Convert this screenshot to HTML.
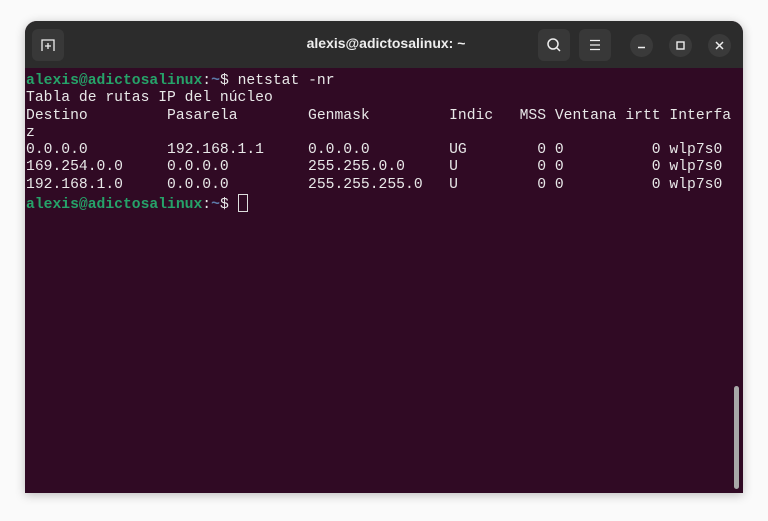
<!DOCTYPE html>
<html><head><style>
body{margin:0;width:768px;height:521px;background:#fafafa;position:relative;overflow:hidden}
.win{position:absolute;left:25px;top:21px;width:718px;height:472px;border-radius:12px 12px 0 0;overflow:hidden;box-shadow:0 2px 10px rgba(0,0,0,.25);background:#300a24}
.hdr{position:absolute;left:0;top:0;width:718px;height:47px;background:#2c2c2c}
.btn{position:absolute;top:8px;width:32px;height:32px;border-radius:6px;background:#383838}
.cb{position:absolute;top:13px;width:23px;height:23px;border-radius:50%;background:#3a3a3a}
.title{position:absolute;left:0;width:718px;top:14px;text-align:center;color:#eee;font:bold 14px "Liberation Sans",sans-serif;padding-left:4px;box-sizing:border-box}
pre{position:absolute;left:1px;top:52px;margin:0;font:14.7px/17.3px "Liberation Mono",monospace;color:#e8e8e8}
.g{color:#26a269;font-weight:bold}.b{color:#5d7aa8;font-weight:bold}
.cur{display:inline-block;width:8px;height:16px;border:1px solid #ddd;vertical-align:-4px}
.sb{position:absolute;left:709px;top:365px;width:5px;height:103px;border-radius:3px;background:#a8a8a8}
</style></head><body>
<div class="win">
<div class="hdr">
<div class="btn" style="left:7px"><svg width="32" height="32"><path d="M10 22V11h12v11M16 14v6M13 17h6" stroke="#eee" stroke-width="1.3" fill="none"/></svg></div>
<div class="title">alexis@adictosalinux: ~</div>
<div class="btn" style="left:513px"><svg width="32" height="32"><circle cx="15" cy="15" r="5" stroke="#eee" stroke-width="1.5" fill="none"/><path d="M19 19l3 3" stroke="#eee" stroke-width="1.5"/></svg></div>
<div class="btn" style="left:554px"><svg width="32" height="32"><path d="M11 11.5h10M11 16h10M11 20.5h10" stroke="#eee" stroke-width="1.3"/></svg></div>
<div class="cb" style="left:605px"><svg width="23" height="23"><path d="M8 13.5h7" stroke="#eee" stroke-width="1.5"/></svg></div>
<div class="cb" style="left:644px"><svg width="23" height="23"><rect x="8" y="8" width="7" height="7" stroke="#eee" stroke-width="1.4" fill="none"/></svg></div>
<div class="cb" style="left:683px"><svg width="23" height="23"><path d="M8 8l7 7M15 8l-7 7" stroke="#eee" stroke-width="1.5"/></svg></div>
</div>
<pre><span class="g">alexis@adictosalinux</span>:<span class="b">~</span>$ netstat -nr
Tabla de rutas IP del núcleo
Destino         Pasarela        Genmask         Indic   MSS Ventana irtt Interfa
z
0.0.0.0         192.168.1.1     0.0.0.0         UG        0 0          0 wlp7s0
169.254.0.0     0.0.0.0         255.255.0.0     U         0 0          0 wlp7s0
192.168.1.0     0.0.0.0         255.255.255.0   U         0 0          0 wlp7s0
<span class="g">alexis@adictosalinux</span>:<span class="b">~</span>$ <span class="cur"></span></pre>
<div class="sb"></div>
</div>
</body></html>
